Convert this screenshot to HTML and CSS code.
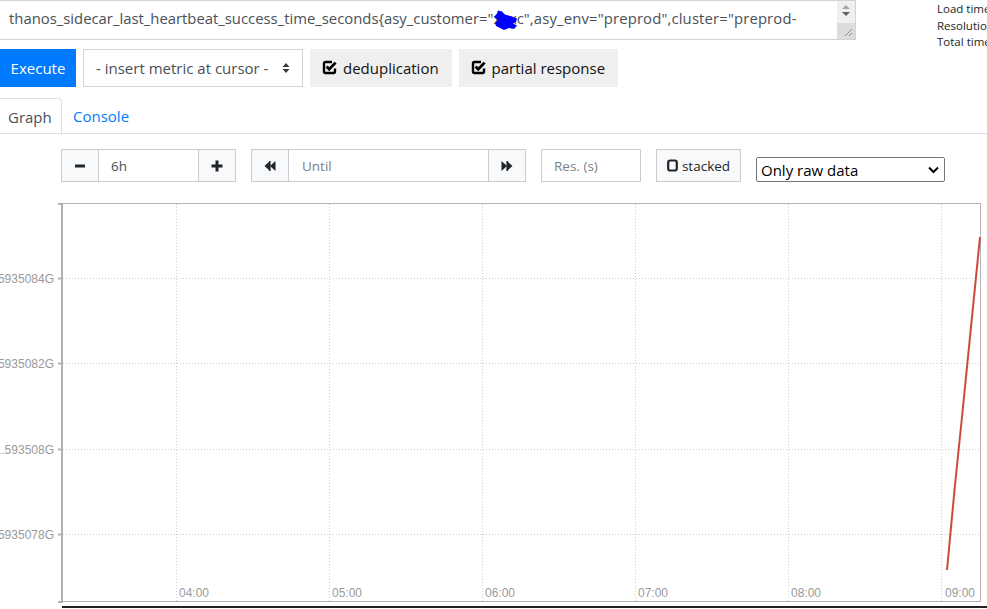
FILE: index.html
```html
<!DOCTYPE html>
<html lang="en">
<head>
    <meta charset="UTF-8">
    <title>Thanos | Graph</title>
    <link rel="stylesheet" href="styles.css">
</head>
<body>
    <div class="query-row">
        <div class="query-box">
            <div class="query-text">thanos_sidecar_last_heartbeat_success_time_seconds{asy_customer="<span class="redact">xxxc</span><span class="query-rest">",asy_env="preprod",cluster="preprod-</span></div>
            <div class="scrollbar">
                <div class="arrows">
                    <svg width="10" height="16" viewBox="0 0 10 16"><path d="M1 7 L5 3 L9 7 Z" fill="#a6a6a6"/><path d="M1 10 L5 14 L9 10 Z" fill="#606060"/></svg>
                </div>
                <div class="grip">
                    <svg width="10" height="10" viewBox="0 0 10 10"><path d="M9 2 L2 9 M9 6 L6 9" stroke="#8a8a8a" stroke-width="1"/></svg>
                </div>
            </div>
            <svg class="scribble" width="25" height="21" viewBox="0 0 25 21"><path d="M5 0.5 L9 1.5 L12 4.5 L19 6.5 L24 8.5 L23 12 L20 13.5 L24 15.5 L21 19 L16 18 L11 20 L7 18 L3 16 L2 13 L5 10 L1 7 L4 3.5 Z" fill="#0000ff"/></svg>
        </div>
        <div class="stats">
            <div>Load time:</div>
            <div>Resolution:</div>
            <div>Total time</div>
        </div>
    </div>

    <div class="exec-row">
        <button class="btn-execute">Execute</button>
        <div class="metric-select">
            <span>- insert metric at cursor -</span>
            <svg width="8" height="12" viewBox="0 0 8 12"><path d="M0.5 5 L4 1 L7.5 5 Z M0.5 7 L4 11 L7.5 7 Z" fill="#343a40"/></svg>
        </div>
        <button class="btn-option">
            <svg class="check" width="15" height="15" viewBox="0 0 15 15"><path d="M10 2 H3.5 Q2 2 2 3.5 V11.5 Q2 13 3.5 13 H11.5 Q13 13 13 11.5 V8.5" fill="none" stroke="#000" stroke-width="2.4"/><path d="M4.6 6.6 L7.2 9.2 L13.6 2.6" fill="none" stroke="#000" stroke-width="2.8"/></svg>
            deduplication
        </button>
        <button class="btn-option">
            <svg class="check" width="15" height="15" viewBox="0 0 15 15"><path d="M10 2 H3.5 Q2 2 2 3.5 V11.5 Q2 13 3.5 13 H11.5 Q13 13 13 11.5 V8.5" fill="none" stroke="#000" stroke-width="2.4"/><path d="M4.6 6.6 L7.2 9.2 L13.6 2.6" fill="none" stroke="#000" stroke-width="2.8"/></svg>
            partial response
        </button>
    </div>

    <ul class="tabs">
        <li class="tab active">Graph</li>
        <li class="tab">Console</li>
    </ul>

    <div class="controls">
        <div class="group">
            <button class="addon">
                <svg width="12" height="12" viewBox="0 0 12 12"><rect x="1" y="4.5" width="10" height="3" fill="#212529"/></svg>
            </button>
            <div class="field range">6h</div>
            <button class="addon">
                <svg width="12" height="12" viewBox="0 0 12 12"><path d="M4.5 0.5 H7.5 V4.5 H11.5 V7.5 H7.5 V11.5 H4.5 V7.5 H0.5 V4.5 H4.5 Z" fill="#212529"/></svg>
            </button>
        </div>
        <div class="group">
            <button class="addon">
                <svg width="12" height="12" viewBox="0 0 12 12"><path d="M6 1 L0.5 6 L6 11 Z M11.5 1 L6 6 L11.5 11 Z" fill="#212529"/><rect x="5" y="1" width="1.6" height="10" fill="#212529"/></svg>
            </button>
            <div class="field until">Until</div>
            <button class="addon">
                <svg width="12" height="12" viewBox="0 0 12 12"><path d="M6 1 L11.5 6 L6 11 Z M0.5 1 L6 6 L0.5 11 Z" fill="#212529"/><rect x="5.4" y="1" width="1.6" height="10" fill="#212529"/></svg>
            </button>
        </div>
        <div class="field res">Res. (s)</div>
        <button class="btn-stacked">
            <svg width="11" height="13" viewBox="0 0 11 13"><rect x="1.2" y="1.5" width="8.6" height="10" rx="2" fill="none" stroke="#212529" stroke-width="2.2"/></svg>
            stacked
        </button>
        <div class="raw-select">
            <span>Only raw data</span>
            <svg width="11" height="8" viewBox="0 0 11 8"><path d="M1 1.5 L5.5 6 L10 1.5" fill="none" stroke="#000" stroke-width="2"/></svg>
        </div>
    </div>

    <div class="graph">
        <svg class="chart" width="987" height="414" viewBox="0 0 987 414">
            <g class="grid" stroke="#cfcfcf" stroke-width="1" stroke-dasharray="1 2">
                <line x1="63" y1="83.5" x2="979" y2="83.5"/>
                <line x1="63" y1="168.5" x2="979" y2="168.5"/>
                <line x1="63" y1="254.5" x2="979" y2="254.5"/>
                <line x1="63" y1="339.5" x2="979" y2="339.5"/>
                <line x1="176.5" y1="9" x2="176.5" y2="407"/>
                <line x1="329.5" y1="9" x2="329.5" y2="407"/>
                <line x1="482.5" y1="9" x2="482.5" y2="407"/>
                <line x1="635.5" y1="9" x2="635.5" y2="407"/>
                <line x1="788.5" y1="9" x2="788.5" y2="407"/>
                <line x1="941.5" y1="9" x2="941.5" y2="407"/>
            </g>
            <g stroke="#b3b3b3" stroke-width="1">
                <line x1="62" y1="8.5" x2="980.5" y2="8.5"/>
                <line x1="980.5" y1="8" x2="980.5" y2="407"/>
                <line x1="62" y1="406.5" x2="980.5" y2="406.5"/>
            </g>
            <g stroke="#b0b0b0" stroke-width="2">
                <line x1="62" y1="8" x2="62" y2="408"/>
                <line x1="58" y1="9" x2="62" y2="9"/>
                <line x1="58" y1="83.5" x2="62" y2="83.5"/>
                <line x1="58" y1="168.5" x2="62" y2="168.5"/>
                <line x1="58" y1="254.5" x2="62" y2="254.5"/>
                <line x1="58" y1="339.5" x2="62" y2="339.5"/>
                <line x1="58" y1="407" x2="62" y2="407"/>
            </g>
            <g class="ylabels" text-anchor="end">
                <text x="54" y="87.5">1.5935084G</text>
                <text x="54" y="172.5">1.5935082G</text>
                <text x="54" y="258.5">1.593508G</text>
                <text x="54" y="343.5">1.5935078G</text>
            </g>
            <g class="xlabels">
                <text x="179" y="402">04:00</text>
                <text x="332" y="402">05:00</text>
                <text x="485" y="402">06:00</text>
                <text x="638" y="402">07:00</text>
                <text x="791" y="402">08:00</text>
                <text x="945" y="402">09:00</text>
            </g>
            <polyline points="947,375 955,290 962,222 980,42" fill="none" stroke="#cb4b3b" stroke-width="2"/>
            <line x1="62" y1="412" x2="987" y2="412" stroke="#222" stroke-width="2"/>
        </svg>
    </div>
</body>
</html>
```

FILE: styles.css
```css
* {
    margin: 0;
    padding: 0;
    box-sizing: border-box;
}
body {
    font-family: "Open Sans", "Noto Sans", sans-serif;
    background: white;
    color: #212529;
    width: 987px;
    height: 609px;
    overflow: hidden;
}
button {
    font-family: inherit;
    cursor: pointer;
}
.query-row {
    display: flex;
    align-items: flex-start;
    height: 49px;
}
.query-box {
    position: relative;
    display: flex;
    flex-shrink: 0;
    width: 856px;
    height: 40px;
    border: 1px solid #ced4da;
    border-left: none;
}
.query-text {
    flex: 1;
    padding: 7px 0 0 9px;
    font-size: 14.85px;
    color: #495057;
    white-space: nowrap;
    overflow: hidden;
}
.redact {
    color: #495057;
}
.query-rest {
    letter-spacing: 0.15px;
}
.scribble {
    position: absolute;
    left: 493px;
    top: 9px;
}
.scrollbar {
    width: 18px;
    display: flex;
    flex-direction: column;
    background: #f0f0f0;
}
.arrows {
    height: 22px;
    display: flex;
    justify-content: center;
    padding-top: 1px;
}
.grip {
    flex: 1;
    background: #dcdcdc;
    display: flex;
    align-items: flex-end;
    justify-content: flex-end;
    padding: 0 2px 2px 0;
}
.stats {
    margin-left: 81px;
    min-width: 0;
    padding-top: 1px;
    font-size: 11.5px;
    line-height: 16.5px;
    color: #212529;
    white-space: nowrap;
}
.exec-row {
    display: flex;
    align-items: center;
    height: 38px;
}
.btn-execute {
    width: 76px;
    height: 38px;
    background: #007bff;
    border: none;
    color: white;
    font-size: 15px;
    margin-right: 7px;
}
.metric-select {
    width: 220px;
    height: 38px;
    border: 1px solid #ced4da;
    display: flex;
    align-items: center;
    justify-content: space-between;
    padding: 0 12px 0 12px;
    font-size: 15px;
    color: #495057;
    margin-right: 7px;
}
.btn-option {
    height: 38px;
    background: #efefef;
    border: none;
    font-size: 15px;
    color: #111;
    display: flex;
    align-items: center;
    gap: 6px;
    padding: 0 13px 0 12px;
    margin-right: 7px;
}
.check {
    margin-top: -1px;
}
.tabs {
    list-style: none;
    display: flex;
    margin-top: 11px;
    height: 36px;
    border-bottom: 1px solid #dee2e6;
}
.tab {
    font-size: 15px;
    padding: 8px 11px 0 11px;
    color: #007bff;
    height: 36px;
}
.tab.active {
    color: #495057;
    padding-left: 8px;
    width: 62px;
    border: 1px solid #dee2e6;
    border-left: none;
    border-bottom-color: white;
    border-top-right-radius: 4px;
    height: 37px;
}
.controls {
    display: flex;
    align-items: flex-end;
    gap: 15px;
    margin: 15px 0 0 61px;
    height: 33px;
}
.group {
    display: flex;
    height: 33px;
}
.addon {
    width: 38px;
    height: 33px;
    background: #f8f9fa;
    border: 1px solid #ccc;
    display: flex;
    align-items: center;
    justify-content: center;
}
.field {
    height: 33px;
    border: 1px solid #ccc;
    border-left: none;
    border-right: none;
    display: flex;
    align-items: center;
    font-size: 13.5px;
    color: #495057;
}
.range {
    width: 99px;
    padding-left: 12px;
}
.until {
    width: 199px;
    padding-left: 13px;
    color: #7a8088;
}
.res {
    width: 100px;
    border: 1px solid #ccc;
    padding-left: 12px;
    color: #7a8088;
}
.btn-stacked {
    width: 85px;
    height: 33px;
    background: #f8f9fa;
    border: 1px solid #ccc;
    font-size: 13.5px;
    color: #212529;
    display: flex;
    align-items: center;
    justify-content: center;
    gap: 4px;
}
.raw-select {
    width: 189px;
    height: 25px;
    border: 1px solid #767676;
    border-radius: 2px;
    display: flex;
    align-items: center;
    justify-content: space-between;
    padding: 0 5px 0 4px;
    font-size: 15px;
    color: #000;
}
.graph {
    margin-top: 13px;
}
.chart {
    display: block;
}
.chart text {
    font-family: "Liberation Sans", Arial, sans-serif;
    font-size: 12px;
    fill: #9a9a9a;
}
```
